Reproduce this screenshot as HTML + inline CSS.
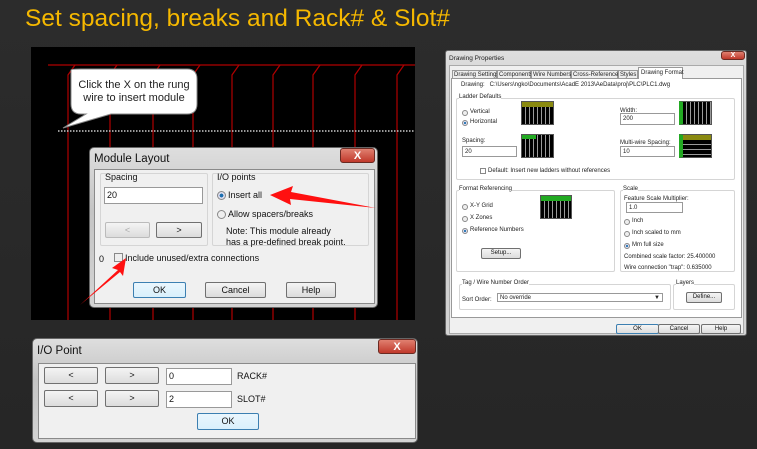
<!DOCTYPE html>
<html><head><meta charset="utf-8"><style>
*{margin:0;padding:0;box-sizing:border-box}
body{width:757px;height:449px;overflow:hidden;background:linear-gradient(180deg,#2c2c2c,#262626);font-family:"Liberation Sans",Arial,sans-serif;position:relative}
.a{position:absolute}
.t{font-size:9px;color:#111;white-space:nowrap}
.s{font-size:6px;color:#222;white-space:nowrap}
.dlg{background:linear-gradient(180deg,#dedede,#c4c4c4 40%,#d4d4d4);border:1px solid #666;border-radius:5px}
.in{background:#f0f0f0;border:1px solid #8a8a8a}
.btn{background:linear-gradient(#f4f4f4,#dcdcdc);border:1px solid #707070;border-radius:2px;text-align:center;color:#111}
.close{background:linear-gradient(#e08070,#c0392b);border:1px solid #6a2a22;border-radius:3px;color:#fff;font-weight:bold;text-align:center}
.grp{border:1px solid #d5d5d5;border-radius:2px}
.field{background:#fff;border:1px solid #999}
.radio{border-radius:50%;border:1px solid #888;background:#eee}
.radio.on{background:radial-gradient(circle,#1c6fb0 35%,#dde 40%)}
.thumb{background:#000;border:1px solid #555}
.vs{background:repeating-linear-gradient(90deg,#000 0 3px,#9a9a9a 3px 4px)}
</style></head><body>
<div class="a" style="left:25px;top:5px;font-size:24.5px;color:#f5b800">Set spacing, breaks and Rack# &amp; Slot#</div>

<div class="a" style="left:31px;top:47px;width:384px;height:273px;background:#000;overflow:hidden">
<svg width="384" height="273" style="position:absolute;left:0;top:0">
<g stroke="#b00000" stroke-width="1.2" fill="none">
<line x1="17" y1="18" x2="384" y2="18"/>
<path d="M37 273V28L44 18M79 273V28L86 18M122 273V28L129 18M162 273V28L169 18M201 273V28L208 18M242 273V28L249 18M282 273V28L289 18M324 273V28L331 18M366 273V28L373 18"/>
</g>
<line x1="27" y1="84" x2="384" y2="84" stroke="#ccc" stroke-dasharray="1.5 1.5" stroke-width="1.5"/>
<path d="M40 23Q40 22 50 22H156Q166 22 166 32V57Q166 67 156 67H80L32 81L55 67H50Q40 67 40 57Z" fill="#fff" stroke="#888"/>
</svg>
<div class="a" style="left:40px;top:32px;width:126px;text-align:center;font-size:11px;line-height:13px;color:#222">Click the X on the rung<br>wire to insert module</div>
</div>

<div class="a dlg" style="left:89px;top:147px;width:289px;height:161px">
<div class="a" style="left:4px;top:5px;font-size:11.5px;color:#111">Module Layout</div>
<div class="a close" style="left:250px;top:0;width:35px;height:15px;font-size:11px;line-height:14px">X</div>
<div class="a in" style="left:4px;top:21px;width:281px;height:135px">
<div class="a grp" style="left:5px;top:3px;width:108px;height:73px"></div>
<div class="a t" style="left:10px;top:2px">Spacing</div>
<div class="a field t" style="left:9px;top:17px;width:99px;height:17px;padding:2px 2px">20</div>
<div class="a btn t" style="left:10px;top:52px;width:45px;height:16px;line-height:14px;color:#aaa;border-color:#bbb">&lt;</div>
<div class="a btn t" style="left:61px;top:52px;width:46px;height:16px;line-height:14px">&gt;</div>
<div class="a grp" style="left:117px;top:3px;width:157px;height:73px"></div>
<div class="a t" style="left:122px;top:2px">I/O points</div>
<div class="a radio on" style="left:122px;top:21px;width:9px;height:9px"></div>
<div class="a t" style="left:133px;top:20px">Insert all</div>
<div class="a radio" style="left:122px;top:40px;width:9px;height:9px"></div>
<div class="a t" style="left:133px;top:39px">Allow spacers/breaks</div>
<div class="a t" style="left:131px;top:56px;line-height:11px">Note: This module already<br>has a pre-defined break point.</div>
<div class="a t" style="left:4px;top:84px">0</div>
<div class="a" style="left:19px;top:83px;width:9px;height:9px;border:1px solid #888;background:#eee"></div>
<div class="a t" style="left:30px;top:83px">Include unused/extra connections</div>
<div class="a btn t" style="left:38px;top:112px;width:53px;height:16px;line-height:14px;border-color:#3c7fb1;background:linear-gradient(#eaf6fd,#d9f0fc)">OK</div>
<div class="a btn t" style="left:110px;top:112px;width:61px;height:16px;line-height:14px">Cancel</div>
<div class="a btn t" style="left:191px;top:112px;width:50px;height:16px;line-height:14px">Help</div>
</div>
</div>
<svg class="a" style="left:0;top:0" width="757" height="449">
<path d="M270 195L293 186L291 192L376 208L290 199L291 205Z" fill="#ff1010"/>
<path d="M80 305L118 270L112 268L126 258L123 276L120 272Z" fill="#ff1010"/>
<path d="M662 287L674 282L673 285L721 291L673 288L673 291Z" fill="#ff1010"/>
</svg>

<div class="a dlg" style="left:445px;top:50px;width:302px;height:286px;border-radius:3px">
<div class="a s" style="left:3px;top:4px;font-size:6.5px">Drawing Properties</div>
<div class="a close" style="left:275px;top:0;width:24px;height:9px;font-size:7px;line-height:8px">X</div>
<div class="a in" style="left:3px;top:14px;width:295px;height:269px;border-color:#aaa"></div>
<div class="a" style="left:5px;top:27px;width:291px;height:240px;background:#fff;border:1px solid #999"></div>
<div class="a s" style="left:6px;top:19px;width:45px;height:9px;border:1px solid #999;background:#eee;padding-left:1px;line-height:8px">Drawing Settings</div>
<div class="a s" style="left:51px;top:19px;width:34px;height:9px;border:1px solid #999;background:#eee;padding-left:1px;line-height:8px">Components</div>
<div class="a s" style="left:85px;top:19px;width:40px;height:9px;border:1px solid #999;background:#eee;padding-left:1px;line-height:8px">Wire Numbers</div>
<div class="a s" style="left:125px;top:19px;width:47px;height:9px;border:1px solid #999;background:#eee;padding-left:1px;line-height:8px">Cross-References</div>
<div class="a s" style="left:172px;top:19px;width:20px;height:9px;border:1px solid #999;background:#eee;padding-left:1px;line-height:8px">Styles</div>
<div class="a s" style="left:192px;top:16px;width:45px;height:12px;border:1px solid #999;border-bottom:none;background:#fff;padding-left:2px;line-height:11px">Drawing Format</div>
<div class="a s" style="left:15px;top:31px">Drawing:&nbsp;&nbsp;&nbsp;C:\Users\ngko\Documents\AcadE 2013\AeData\proj\PLC\PLC1.dwg</div>
<div class="a grp" style="left:10px;top:47px;width:279px;height:82px"></div>
<div class="a s" style="left:13px;top:43px;background:#fff">Ladder Defaults</div>
<div class="a radio" style="left:16px;top:59px;width:6px;height:6px"></div><div class="a s" style="left:24px;top:58px">Vertical</div>
<div class="a radio on" style="left:16px;top:69px;width:6px;height:6px"></div><div class="a s" style="left:24px;top:68px">Horizontal</div>
<div class="a thumb vs" style="left:75px;top:50px;width:33px;height:24px"><div style="height:5px;background:#8a8a10"></div></div>
<div class="a s" style="left:16px;top:87px">Spacing:</div>
<div class="a field s" style="left:16px;top:95px;width:55px;height:11px;padding:2px">20</div>
<div class="a thumb vs" style="left:75px;top:83px;width:33px;height:24px"><div style="height:4px;width:14px;background:#2a2"></div></div>
<div class="a s" style="left:174px;top:57px">Width:</div>
<div class="a field s" style="left:174px;top:62px;width:55px;height:12px;padding:2px">200</div>
<div class="a thumb vs" style="left:233px;top:50px;width:33px;height:24px;border-left:4px solid #2a2"></div>
<div class="a s" style="left:174px;top:89px">Multi-wire Spacing:</div>
<div class="a field s" style="left:174px;top:95px;width:55px;height:11px;padding:2px">10</div>
<div class="a thumb" style="left:233px;top:83px;width:33px;height:24px;background:repeating-linear-gradient(180deg,#000 0 4px,#9a9a9a 4px 5px);border-left:4px solid #2a2"><div style="height:5px;background:#8a8a10"></div></div>
<div class="a" style="left:34px;top:117px;width:6px;height:6px;border:1px solid #888"></div>
<div class="a s" style="left:42px;top:117px">Default: Insert new ladders without references</div>
<div class="a grp" style="left:10px;top:139px;width:159px;height:82px"></div>
<div class="a s" style="left:13px;top:135px;background:#fff">Format Referencing</div>
<div class="a thumb vs" style="left:94px;top:144px;width:32px;height:24px"><div style="height:5px;background:#2a2"></div></div>
<div class="a radio" style="left:16px;top:153px;width:6px;height:6px"></div><div class="a s" style="left:24px;top:152px">X-Y Grid</div>
<div class="a radio" style="left:16px;top:165px;width:6px;height:6px"></div><div class="a s" style="left:24px;top:164px">X Zones</div>
<div class="a radio on" style="left:16px;top:177px;width:6px;height:6px"></div><div class="a s" style="left:24px;top:176px">Reference Numbers</div>
<div class="a btn s" style="left:35px;top:197px;width:40px;height:11px;line-height:9px">Setup...</div>
<div class="a grp" style="left:174px;top:139px;width:115px;height:82px"></div>
<div class="a s" style="left:177px;top:135px;background:#fff">Scale</div>
<div class="a s" style="left:178px;top:145px">Feature Scale Multiplier:</div>
<div class="a field s" style="left:180px;top:151px;width:57px;height:11px;padding:2px">1.0</div>
<div class="a radio" style="left:178px;top:168px;width:6px;height:6px"></div><div class="a s" style="left:186px;top:167px">Inch</div>
<div class="a radio" style="left:178px;top:180px;width:6px;height:6px"></div><div class="a s" style="left:186px;top:179px">Inch scaled to mm</div>
<div class="a radio on" style="left:178px;top:192px;width:6px;height:6px"></div><div class="a s" style="left:186px;top:191px">Mm full size</div>
<div class="a s" style="left:178px;top:203px">Combined scale factor: 25.400000</div>
<div class="a s" style="left:178px;top:214px">Wire connection "trap": 0.635000</div>
<div class="a grp" style="left:13px;top:233px;width:212px;height:26px"></div>
<div class="a s" style="left:16px;top:229px;background:#fff">Tag / Wire Number Order</div>
<div class="a s" style="left:16px;top:246px">Sort Order:</div>
<div class="a field s" style="left:51px;top:242px;width:166px;height:9px;padding:1px 2px">No override<span style="float:right">&#9660;</span></div>
<div class="a grp" style="left:227px;top:233px;width:62px;height:26px"></div>
<div class="a s" style="left:230px;top:229px;background:#fff">Layers</div>
<div class="a btn s" style="left:240px;top:241px;width:36px;height:11px;line-height:9px">Define...</div>
<div class="a btn s" style="left:170px;top:273px;width:43px;height:10px;line-height:8px;border-color:#3c7fb1">OK</div>
<div class="a btn s" style="left:212px;top:273px;width:42px;height:10px;line-height:8px">Cancel</div>
<div class="a btn s" style="left:255px;top:273px;width:40px;height:10px;line-height:8px">Help</div>
</div>

<div class="a dlg" style="left:32px;top:338px;width:386px;height:105px">
<div class="a" style="left:4px;top:6px;font-size:11.5px;color:#111">I/O Point</div>
<div class="a close" style="left:345px;top:0;width:38px;height:15px;font-size:11px;line-height:14px">X</div>
<div class="a in" style="left:5px;top:24px;width:378px;height:76px">
<div class="a btn t" style="left:5px;top:3px;width:54px;height:17px;line-height:15px">&lt;</div>
<div class="a btn t" style="left:66px;top:3px;width:54px;height:17px;line-height:15px">&gt;</div>
<div class="a field t" style="left:127px;top:4px;width:66px;height:17px;padding:2px 2px">0</div>
<div class="a t" style="left:198px;top:7px">RACK#</div>
<div class="a btn t" style="left:5px;top:26px;width:54px;height:17px;line-height:15px">&lt;</div>
<div class="a btn t" style="left:66px;top:26px;width:54px;height:17px;line-height:15px">&gt;</div>
<div class="a field t" style="left:127px;top:27px;width:66px;height:17px;padding:2px 2px">2</div>
<div class="a t" style="left:198px;top:30px">SLOT#</div>
<div class="a btn t" style="left:158px;top:49px;width:62px;height:17px;line-height:15px;border-color:#3c7fb1;background:linear-gradient(#eaf6fd,#d9f0fc)">OK</div>
</div>
</div>
</body></html>
